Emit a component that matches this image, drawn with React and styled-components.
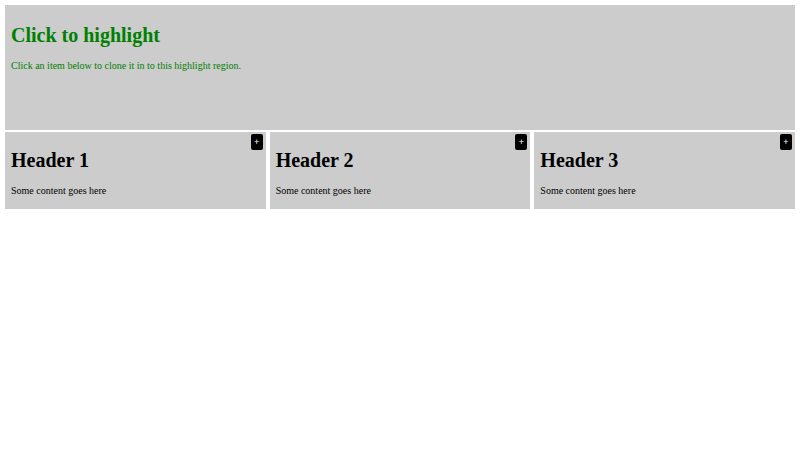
import React from "react";
import styled, { createGlobalStyle } from "styled-components";

const Global = createGlobalStyle`
  html, body { margin: 0; padding: 0; background: #fff; }
  body { font-family: "Liberation Serif", "Times New Roman", serif; }
`;

const Page = styled.div`
  padding: 5px;
  display: flex;
  flex-direction: column;
  gap: 2px;
`;

const Highlight = styled.section`
  background: #cccccc;
  height: 125px;
  box-sizing: border-box;
  padding: 0 6px;
  overflow: hidden;
  color: #008000;
`;

const Title = styled.h2`
  margin: ${(p) => p.$top}px 0 0;
  font-size: 20px;
  line-height: 24px;
  font-weight: bold;
  color: ${(p) => p.$color || "inherit"};
`;

const Text = styled.p`
  margin: 13px 0 0;
  font-size: 10px;
  line-height: 12px;
`;

const Row = styled.div`
  display: grid;
  grid-template-columns: repeat(3, 1fr);
  gap: 4px;
`;

const Card = styled.div`
  position: relative;
  background: #cccccc;
  height: 77px;
  box-sizing: border-box;
  padding: 0 6px;
  color: #000;
`;

const AddButton = styled.button`
  position: absolute;
  top: 2px;
  right: 3px;
  width: 12px;
  height: 16px;
  padding: 0;
  border: none;
  border-radius: 2px;
  background: #000;
  color: #fff;
  font-family: "Liberation Sans", Arial, sans-serif;
  font-size: 9px;
  line-height: 16px;
  text-align: center;
  cursor: pointer;
`;

const items = ["Header 1", "Header 2", "Header 3"];

export default function App() {
  return (
    <>
      <Global />
      <Page>
        <Highlight>
          <Title $top={18}>Click to highlight</Title>
          <Text>Click an item below to clone it in to this highlight region.</Text>
        </Highlight>
        <Row>
          {items.map((h) => (
            <Card key={h}>
              <AddButton>+</AddButton>
              <Title $top={16}>{h}</Title>
              <Text>Some content goes here</Text>
            </Card>
          ))}
        </Row>
      </Page>
    </>
  );
}
